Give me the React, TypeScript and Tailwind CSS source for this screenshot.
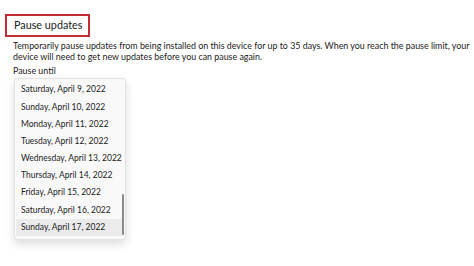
const DATES = [
  "Saturday, April 9, 2022",
  "Sunday, April 10, 2022",
  "Monday, April 11, 2022",
  "Tuesday, April 12, 2022",
  "Wednesday, April 13, 2022",
  "Thursday, April 14, 2022",
  "Friday, April 15, 2022",
  "Saturday, April 16, 2022",
  "Sunday, April 17, 2022",
];

export default function App() {
  return (
    <div className="h-[266px] w-[474px] overflow-hidden bg-white font-['Lato',sans-serif] text-[#1b1b1b]">
      <div className="flex pl-[5px] pt-[14px]">
        <div className="flex h-[23px] items-center border-2 border-[#c42b35] pl-[7px] pr-[6px] text-[10.8px] leading-none">
          Pause updates
        </div>
      </div>
      <p className="mt-[2.5px] whitespace-nowrap pl-[13px] text-[8.9px] leading-[11px]">
        Temporarily pause updates from being installed on this device for up to 35 days. When you reach the pause limit, your
        <br />
        device will need to get new updates before you can pause again.
      </p>
      <p className="mt-[3.5px] pl-[13px] text-[8.9px] leading-[11px]">Pause until</p>
      <div className="ml-[14px] mt-[1.5px] w-[112px] rounded-[3px] border border-[#e3e3e3] bg-[#f9f9f9] pb-[3px] pt-[2.6px] shadow-[0_4px_10px_rgba(0,0,0,0.14)]">
        <div className="relative">
          {DATES.map((d, i) => (
            <div
              key={d}
              className={
                i === DATES.length - 1
                  ? "mx-[1px] flex h-[17.2px] items-center whitespace-nowrap rounded-[2px] bg-[#ebebeb] pl-[5px] text-[8.5px]"
                  : "flex h-[17.2px] items-center whitespace-nowrap pl-[6px] text-[8.5px]"
              }
            >
              {d}
            </div>
          ))}
          <div className="absolute bottom-[1px] right-[1px] h-[41px] w-[2px] rounded-full bg-[#8a8a8a]" />
        </div>
      </div>
    </div>
  );
}
